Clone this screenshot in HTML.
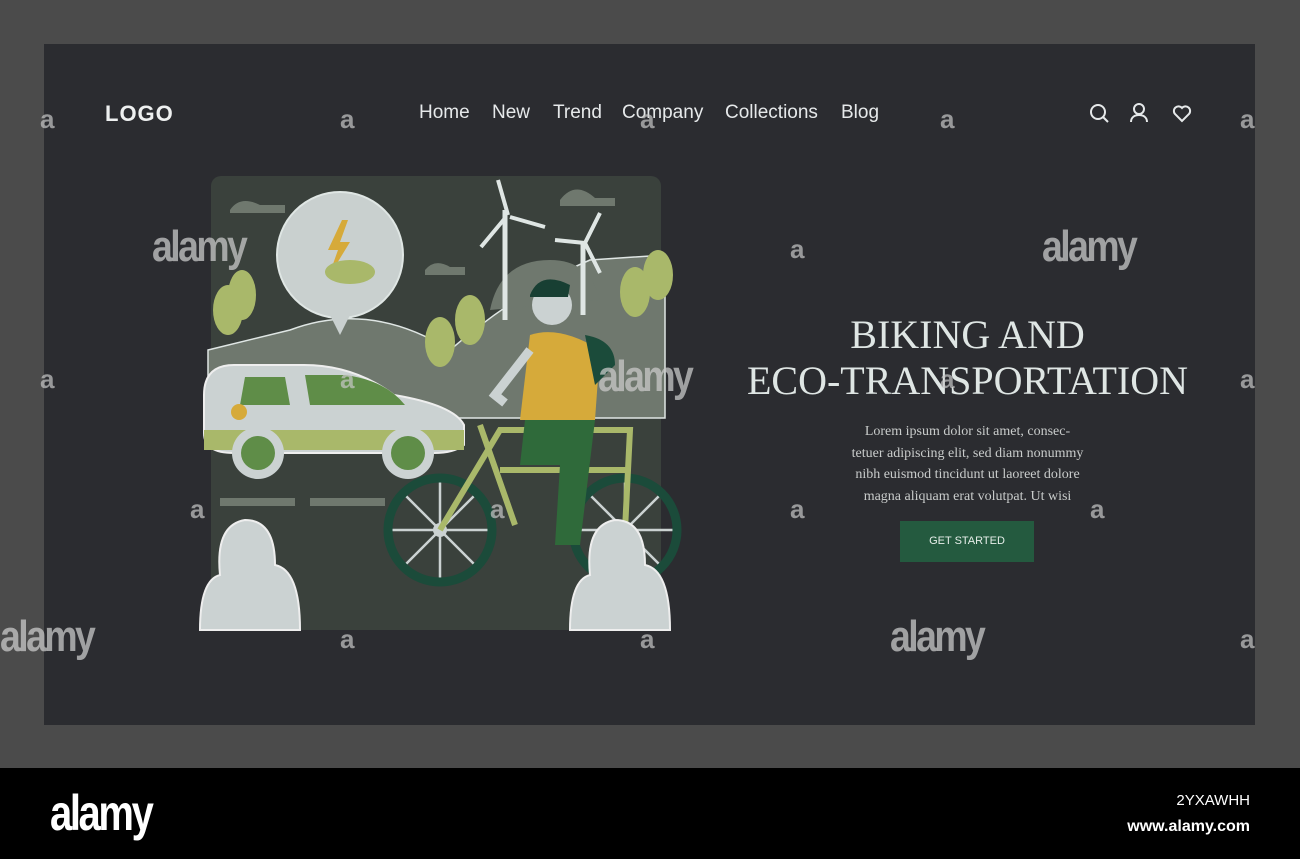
<!DOCTYPE html>
<html><head><meta charset="utf-8"><style>
*{margin:0;padding:0;box-sizing:border-box}
body{width:1300px;height:859px;background:#4b4b4b;position:relative;overflow:hidden;font-family:"Liberation Sans",sans-serif}
.panel{position:absolute;left:44px;top:44px;width:1211px;height:681px;background:#2b2c30}
.nav{position:absolute;top:102px;font-size:19px;color:#e6e9ea}
.logo{position:absolute;left:105px;top:101px;font-size:22px;font-weight:bold;color:#eef0f0;letter-spacing:1px}
.h1{position:absolute;left:700px;width:535px;text-align:center;font-family:"Liberation Serif",serif;color:#dfe6e4;font-size:40px;line-height:46px;top:312px}
.p{position:absolute;left:800px;width:335px;text-align:center;font-family:"Liberation Serif",serif;color:#c9cccb;font-size:14px;line-height:21.5px;top:421px;white-space:nowrap}
.btn{position:absolute;left:900px;top:521px;width:134px;height:41px;background:#245a3f;color:#e6eee9;font-size:11px;text-align:center;line-height:41px}
.wm{position:absolute;color:rgba(200,200,200,.75);font-weight:bold;font-size:44px;letter-spacing:-3px;transform:scaleX(.85);transform-origin:left}
.a{position:absolute;color:rgba(200,200,200,.7);font-weight:bold;font-size:26px}
.bar{position:absolute;left:0;top:768px;width:1300px;height:91px;background:#000}
</style></head><body>
<div class="panel"></div>
<div class="logo">LOGO</div>
<div class="nav" style="left:419px">Home</div>
<div class="nav" style="left:492px">New</div>
<div class="nav" style="left:553px">Trend</div>
<div class="nav" style="left:622px">Company</div>
<div class="nav" style="left:725px">Collections</div>
<div class="nav" style="left:841px">Blog</div>
<svg style="position:absolute;left:1088px;top:102px" width="108" height="24" fill="none" stroke="#e6e9ea" stroke-width="2">
<circle cx="10" cy="10" r="7"/><path d="M15 15l5 5"/>
<circle cx="51" cy="7" r="5"/><path d="M43 20c0-5 4-7 8-7s8 2 8 7"/>
<path d="M94 19l-7-7a4.5 4.5 0 0 1 7-6a4.5 4.5 0 0 1 7 6z"/>
</svg>
<svg style="position:absolute;left:190px;top:170px" width="510" height="470" viewBox="0 0 510 470">
<rect x="21" y="6" width="450" height="454" rx="10" fill="#3a413c"/>
<path d="M18 180 L100 160 Q180 130 260 180 Q330 120 400 90 L475 85 L475 248 L18 248z" fill="#6f786e" stroke="#dfe6e4" stroke-width="1.5"/>
<path d="M40 40 q10-15 30-5 h25v8h-55z M370 30 q15-20 35-2 h20v8h-55z M235 100 q10-12 25-3 h15v8h-40z" fill="#6f786e"/>
<path d="M300 140 q10-50 60-50 q40 0 50 40z" fill="#6f786e"/>
<path d="M315 150V40 M393 145V72" stroke="#dfe6e4" stroke-width="5"/>
<path d="M318 45l-10-35 M320 47l35 10 M316 47l-25 30 M395 73l15-30 M395 73l-30-3 M395 73l15 30" stroke="#dfe6e4" stroke-width="4"/>
<circle cx="150" cy="85" r="63" fill="#c9d0cf" stroke="#dfe6e4" stroke-width="2"/>
<path d="M140 145l10 20 10-20z" fill="#c9d0cf"/>
<path d="M152 50l-14 30h10l-10 28 22-36h-10l8-22z" fill="#d6aa3a"/>
<ellipse cx="160" cy="102" rx="25" ry="12" fill="#a9b86a"/>
<ellipse cx="38" cy="140" rx="15" ry="25" fill="#a9b86a"/><ellipse cx="52" cy="125" rx="14" ry="25" fill="#a9b86a"/>
<ellipse cx="250" cy="172" rx="15" ry="25" fill="#a9b86a"/><ellipse cx="280" cy="150" rx="15" ry="25" fill="#a9b86a"/>
<ellipse cx="445" cy="122" rx="15" ry="25" fill="#a9b86a"/><ellipse cx="468" cy="105" rx="15" ry="25" fill="#a9b86a"/>
<path d="M14 225 q0-30 30-30 h70 q50 0 90 30 q60 10 70 30 v20 q-10 8-30 8 h-200 q-30 0-30-20z" fill="#cbd2d2" stroke="#eee" stroke-width="2"/>
<path d="M55 207h40l5 28h-50z M115 205h40q40 5 60 30h-95z" fill="#5f8d48"/>
<path d="M14 260h260v20h-260z" fill="#a9b86a"/>
<circle cx="68" cy="283" r="26" fill="#cbd2d2"/><circle cx="68" cy="283" r="17" fill="#5f8d48"/>
<circle cx="218" cy="283" r="26" fill="#cbd2d2"/><circle cx="218" cy="283" r="17" fill="#5f8d48"/>
<circle cx="49" cy="242" r="8" fill="#d6aa3a"/>
<rect x="30" y="328" width="75" height="8" fill="#6f786e"/><rect x="120" y="328" width="75" height="8" fill="#6f786e"/>
<g stroke="#cbd2d2" stroke-width="2.5"><path d="M250 312v96 M202 360h96 M216 326l68 68 M284 326l-68 68 M435 312v96 M387 360h96 M401 326l68 68 M469 326l-68 68"/></g>
<circle cx="250" cy="360" r="52" fill="none" stroke="#1b4b3a" stroke-width="9"/>
<circle cx="435" cy="360" r="52" fill="none" stroke="#1b4b3a" stroke-width="9"/>
<circle cx="250" cy="360" r="7" fill="#cbd2d2"/>
<path d="M250 360l60-100h130l-5 100 M310 300h130 M290 255l35 100" stroke="#a9b86a" stroke-width="6" fill="none"/>
<path d="M340 165 q30-10 70 15 l-5 70 h-75z" fill="#d6aa3a"/>
<path d="M335 250 h70 l-15 125 h-25 l5-80 h-40z" fill="#2f6a3a"/>
<path d="M340 180 l-35 45 l10 8" stroke="#cbd2d2" stroke-width="9" fill="none"/>
<circle cx="362" cy="135" r="20" fill="#cbd2d2"/><path d="M340 125 q10-25 40-10 l-2 12h-38z" fill="#183f33"/>
<path d="M395 165 q30 5 30 30 l-20 20z" fill="#1b4b3a"/>
<path d="M10 460 q0-50 20-55 q-5-50 25-55 q30 0 30 45 q25 5 25 65z" fill="#cbd2d2" stroke="#eee" stroke-width="2"/>
<path d="M380 460 q0-50 20-55 q-5-50 25-55 q30 0 30 45 q25 5 25 65z" fill="#cbd2d2" stroke="#eee" stroke-width="2"/>
</svg>
<div class="h1">BIKING AND<br>ECO-TRANSPORTATION</div>
<div class="p">Lorem ipsum dolor sit amet, consec-<br>tetuer adipiscing elit, sed diam nonummy<br>nibh euismod tincidunt ut laoreet dolore<br>magna aliquam erat volutpat. Ut wisi</div>
<div class="btn">GET STARTED</div>
<div class="wm" style="left:152px;top:222px">alamy</div>
<div class="wm" style="left:1042px;top:222px">alamy</div>
<div class="wm" style="left:598px;top:352px">alamy</div>
<div class="wm" style="left:0;top:612px">alamy</div>
<div class="wm" style="left:890px;top:612px">alamy</div>
<div class="a" style="left:340px;top:104px">a</div><div class="a" style="left:640px;top:104px">a</div><div class="a" style="left:940px;top:104px">a</div><div class="a" style="left:1240px;top:104px">a</div><div class="a" style="left:40px;top:104px">a</div>
<div class="a" style="left:790px;top:234px">a</div>
<div class="a" style="left:40px;top:364px">a</div><div class="a" style="left:340px;top:364px">a</div><div class="a" style="left:940px;top:364px">a</div><div class="a" style="left:1240px;top:364px">a</div>
<div class="a" style="left:190px;top:494px">a</div><div class="a" style="left:490px;top:494px">a</div><div class="a" style="left:790px;top:494px">a</div><div class="a" style="left:1090px;top:494px">a</div>
<div class="a" style="left:340px;top:624px">a</div><div class="a" style="left:640px;top:624px">a</div><div class="a" style="left:1240px;top:624px">a</div>
<div class="bar">
<div style="position:absolute;left:50px;top:16px;color:#fff;font-weight:bold;font-size:50px;letter-spacing:-3px;transform:scaleX(.8);transform-origin:left">alamy</div>
<div style="position:absolute;right:50px;top:20px;color:#fff;font-size:15px;text-align:right;line-height:26px">2YXAWHH<br><b style="font-size:16px">www.alamy.com</b></div>
</div>
</body></html>
